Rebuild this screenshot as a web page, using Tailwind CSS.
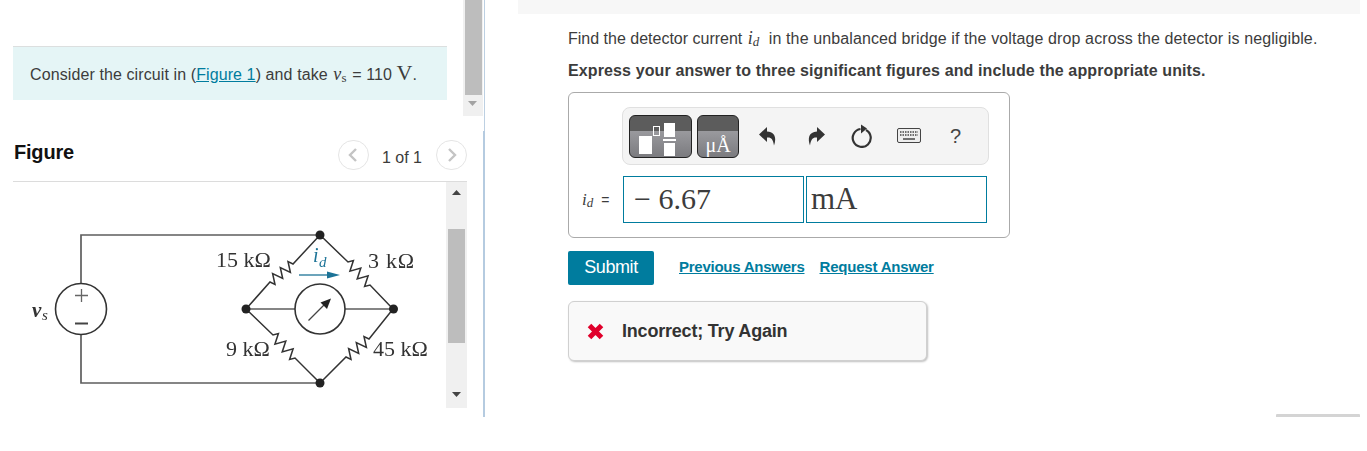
<!DOCTYPE html>
<html>
<head>
<meta charset="utf-8">
<script src="https://cdn.jsdelivr.net/npm/@tailwindcss/browser@4"></script>
</head>
<body class="bg-white">
<div class="flex w-[1367px] h-[451px] font-['Liberation_Sans',Arial,sans-serif] text-[16px] text-[#3c3c3c] overflow-hidden">
  <!-- Left column -->
  <div class="w-[485px] h-[417px] flex flex-col shrink-0">
    <div class="h-[131px] flex border-r border-[#bdd0e2]">
      <div class="w-[463px] pl-[13px] pt-[46px]">
        <div class="w-[434px] h-[54px] bg-[#e5f5f6] border-t border-[#dcdfdf] pl-[17px] pb-[2px] flex items-center">
          <span class="whitespace-nowrap tracking-[0.1px]">Consider the circuit in (<a class="text-[#007c9e] underline">Figure 1</a>) and take <i class="font-['Liberation_Serif',serif] text-[18px] ml-px">v</i><span class="font-['Liberation_Serif',serif] text-[13px] relative top-[2px]">s</span><span class="ml-[1px]"> = 110 </span><span class="font-['Liberation_Serif',serif] text-[22px]">V</span>.</span>
        </div>
      </div>
      <div class="w-[20px] h-[116px] bg-[#f0f0f0] flex flex-col items-center">
        <div class="w-[17px] h-[95px] bg-[#bdbdbd]"></div>
        <svg class="mt-[6px]" width="10" height="6" viewBox="0 0 10 6"><polygon points="0,0 9,0 4.5,5" fill="#a3a3a3"/></svg>
      </div>
    </div>
    <div class="flex-1 border-r-2 border-[#b5cbe0]">
      <div class="ml-[13px] w-[454px] h-[51px] border-b border-[#dcdcdc] flex relative">
        <h2 class="ml-px mt-[8px] text-[20px] font-bold leading-[26px] text-[#111] tracking-[-0.2px]">Figure</h2>
        <div class="ml-auto flex items-start mt-[9px]">
          <div class="w-[31px] h-[30px] rounded-full border border-[#e5e5e5] flex items-center justify-center">
            <svg width="12" height="16" viewBox="0 0 12 16"><path d="M9 2L3 8l6 6" fill="none" stroke="#c4c4c4" stroke-width="2.4"/></svg>
          </div>
          <span class="ml-[13px] mr-[14px] mt-[8px] leading-[20px]">1 of 1</span>
          <div class="w-[31px] h-[30px] rounded-full border border-[#e5e5e5] flex items-center justify-center">
            <svg width="12" height="16" viewBox="0 0 12 16"><path d="M3 2l6 6-6 6" fill="none" stroke="#c4c4c4" stroke-width="2.4"/></svg>
          </div>
        </div>
      </div>
      <div class="ml-[13px] w-[454px] h-[226px] flex">
        <svg class="w-[433px] h-[226px] shrink-0 blur-[0.35px]" viewBox="13 182 433 226" fill="none">
          <g stroke="#5e5e5e" stroke-width="1.7">
            <path d="M81 283V235H320M81 335V383H320"/>
            <path d="M246 309H295M345 309H393"/>
          </g>
          <g stroke="#333" stroke-width="1.5" stroke-linejoin="miter">
            <path d="M246 309L270 282L275 284.500L272.600 273.500L282.700 278.500L280.300 267.500L290.400 272.500L288 261.500L293 264L320 235"/>
            <path d="M320 235L348 262L353.400 260.500L349.900 271.200L360.800 268.100L357.200 278.900L368.100 275.800L364.600 286.500L370 285L393 309"/>
            <path d="M246 309L273 335L278.400 333.500L274.900 344.200L285.800 341.100L282.200 351.900L293.100 348.800L289.600 359.500L295 358L320 383"/>
            <path d="M320 383L346 357L351 359.500L348.600 348.500L358.700 353.500L356.300 342.500L366.400 347.500L364 336.500L369 339L393 309"/>
          </g>
          <circle cx="81" cy="309" r="25.500" stroke="#333" stroke-width="1.600" fill="#fff"/>
          <circle cx="320" cy="309" r="25" stroke="#333" stroke-width="1.600" fill="#fff"/>
          <path d="M75 295.500H88M81.500 289V302" stroke="#666" stroke-width="1.300"/>
          <path d="M75 323.500H88" stroke="#444" stroke-width="2"/>
          <path d="M308.500 320.500L325 304" stroke="#444" stroke-width="1.300"/>
          <polygon points="331,298.500 327,309 320.500,302.500" fill="#222"/>
          <path d="M299 275H328" stroke="#1c7397" stroke-width="1.300"/>
          <polygon points="340,275 327,271.500 327,278.500" fill="#1c7397"/>
          <g fill="#222">
            <circle cx="320" cy="235" r="4.500"/><circle cx="246" cy="309" r="4.500"/><circle cx="393.500" cy="309" r="4.500"/><circle cx="320" cy="383" r="4.500"/>
          </g>
          <g font-family="'Liberation Serif',serif" font-size="22" fill="#333">
            <text x="216" y="267">15 kΩ</text>
            <text x="368" y="268" textLength="46">3 kΩ</text>
            <text x="226" y="356">9 kΩ</text>
            <text x="373" y="356">45 kΩ</text>
            <text x="32" y="317" font-style="italic" font-weight="bold" font-size="21">v</text>
            <text x="42" y="320" font-style="italic" font-size="15">s</text>
            <text x="313" y="262" font-style="italic" fill="#1c7397" font-size="20">i</text>
            <text x="319" y="267" font-style="italic" fill="#1c7397" font-size="15">d</text>
          </g>
        </svg>
        <div class="w-[21px] bg-[#f0f0f0] flex flex-col items-center">
          <svg class="mt-[8px]" width="10" height="6" viewBox="0 0 10 6"><polygon points="0,5 9,5 4.500,0" fill="#444"/></svg>
          <div class="mt-[33px] w-[17px] h-[114px] bg-[#bdbdbd]"></div>
          <svg class="mt-[49px]" width="10" height="6" viewBox="0 0 10 6"><polygon points="0,0 9,0 4.500,5" fill="#444"/></svg>
        </div>
      </div>
    </div>
  </div>
  <!-- Right column -->
  <div class="ml-[33px] w-[842px] h-[417px] flex flex-col shrink-0">
    <div class="h-[14px] bg-[#f7f7f7] shrink-0"></div>
    <div class="pl-[50px] flex-1">
      <p class="mt-[15px] leading-[18px] whitespace-nowrap">Find the detector current <i class="font-['Liberation_Serif',serif] text-[18px] ml-[1px]">i</i><i class="font-['Liberation_Serif',serif] text-[13px] relative top-[2px]">d</i><span class="tracking-[0.11px] ml-[5px]"> in the unbalanced bridge if the voltage drop across the detector is negligible.</span></p>
      <p class="mt-[13px] leading-[18px] font-bold whitespace-nowrap tracking-[0.12px]">Express your answer to three significant figures and include the appropriate units.</p>
      <div class="mt-[12px] w-[442px] h-[146px] border border-[#aaaaaa] rounded-[6px] pt-[14px]">
        <div class="ml-[53px] w-[367px] h-[58px] bg-[#f4f4f4] border border-[#e0e0e0] rounded-[8px] flex items-center pl-[6px]">
          <div class="w-[63px] h-[43px] rounded-[6px] border border-[#222] bg-[linear-gradient(#5c5c5c_0,#5c5c5c_36%,#9a9a9e_36%,#7b7b7f_100%)] flex items-end pl-[9px] pb-[1px] gap-[2px] relative">
            <div class="w-[13px] h-[18px] bg-white mb-[2px]"></div>
            <div class="w-[7px] h-[10px] border border-white mb-[20px] -ml-[1px]"></div>
            <div class="flex flex-col items-center ml-[1px] gap-[2px]">
              <div class="w-[11px] h-[14px] bg-white"></div>
              <div class="w-[13px] h-[2px] bg-white"></div>
              <div class="w-[11px] h-[13px] bg-white"></div>
            </div>
          </div>
          <div class="ml-[5px] w-[42px] h-[43px] rounded-[6px] border border-[#222] bg-[linear-gradient(#5c5c5c_0,#5c5c5c_36%,#9a9a9e_36%,#7b7b7f_100%)] flex items-end justify-center">
            <span class="font-['Liberation_Serif',serif] text-white text-[20px] leading-[24px]">μÅ</span>
          </div>
          <svg class="ml-[20px]" width="18" height="21" viewBox="0 0 18 21"><path d="M8 1L0 8.500l8 7.500v-4.500c4-.5 6 1.500 7 8 2.500-7 1.500-13.500-7-14z" fill="#333"/></svg>
          <svg class="ml-[30px]" width="18" height="21" viewBox="0 0 18 21"><path d="M10 1l8 7.500-8 7.500v-4.500c-4-.5-6 1.500-7 8-2.500-7-1.500-13.500 7-14z" fill="#333"/></svg>
          <svg class="ml-[26px]" width="22" height="24" viewBox="0 0 22 24"><path d="M15 6a9 9 0 1 1-5.500-1" fill="none" stroke="#333" stroke-width="2.200"/><polygon points="10,0.500 10,9.500 16,4.500" fill="#333"/></svg>
          <svg class="ml-[24px]" width="24" height="16" viewBox="0 0 24 16"><rect x=".5" y=".5" width="23" height="14" rx="1.500" fill="#eee" stroke="#444"/><path d="M3 4h18M3 7h18" stroke="#444" stroke-width="1.500" stroke-dasharray="1.500 1"/><path d="M6 11h12" stroke="#444" stroke-width="1.500"/></svg>
          <span class="ml-[29px] text-[20px] leading-[24px] text-[#444]">?</span>
        </div>
        <div class="flex items-center mt-[11px] ml-[13px]">
          <span class="w-[41px] text-[14px] whitespace-nowrap"><i class="font-['Liberation_Serif',serif] text-[17px]">i</i><i class="font-['Liberation_Serif',serif] text-[13px] relative top-[2px]">d</i><span class="ml-[8px]">=</span></span>
          <div class="w-[181px] h-[47px] border border-[#007c9e] flex items-center pl-[10px] pb-[2px] font-['Liberation_Serif',serif] text-[30px] whitespace-nowrap">− 6.67</div>
          <div class="ml-[2px] w-[181px] h-[47px] border border-[#007c9e] flex items-center pl-[4px] font-['Liberation_Serif',serif] text-[31px]">mA</div>
        </div>
      </div>
      <div class="mt-[13px] flex items-center">
        <button class="w-[86px] h-[34px] rounded-[2px] bg-[#007c9e] text-white text-[18px] tracking-[-0.4px] pb-[2px]">Submit</button>
        <a class="ml-[25px] mb-[2px] text-[#007c9e] underline font-bold text-[15px] tracking-[-0.25px]">Previous Answers</a>
        <a class="ml-[15px] mb-[2px] text-[#007c9e] underline font-bold text-[15px] tracking-[-0.2px]">Request Answer</a>
      </div>
      <div class="mt-[16px] w-[359px] h-[60px] bg-[#f9f9f9] border border-[#d0d0d0] rounded-[6px] shadow-[1px_1px_2px_rgba(0,0,0,0.25)] flex items-center pl-[18px] pt-[1px]">
        <svg width="17" height="17" viewBox="0 0 17 17"><path d="M2.500 2.500L14.500 14.500M14.500 2.500L2.500 14.500" stroke="#e0002b" stroke-width="5"/></svg>
        <span class="ml-[18px] font-bold text-[18px] tracking-[-0.2px] text-[#333]">Incorrect; Try Again</span>
      </div>
    </div>
    <div class="self-end w-[84px] h-[3px] rounded-t-[1px] bg-[#d4d4d4] shrink-0"></div>
  </div>
</div>
</body>
</html>
